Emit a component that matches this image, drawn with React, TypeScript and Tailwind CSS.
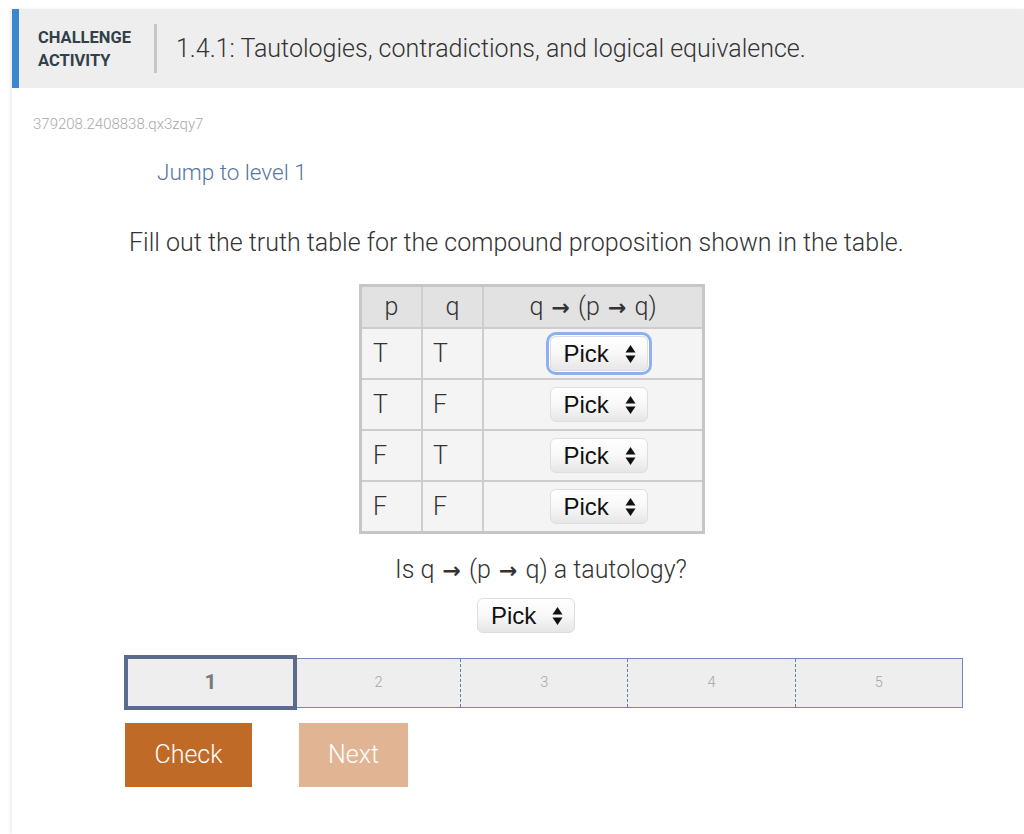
import React from "react";

const font = { fontFamily: "Roboto, 'Helvetica Neue', Arial, sans-serif" };

function Arr() {
  return (
    <span className="mx-[2px] text-[22px] font-bold leading-none" style={{ fontFamily: "'DejaVu Sans', sans-serif" }}>
      →
    </span>
  );
}

function Arrows() {
  return (
    <svg width="11" height="20" viewBox="0 0 11 20" className="shrink-0">
      <path d="M5.5 1 L10.5 8.5 L0.5 8.5 Z" fill="#111" />
      <path d="M5.5 19 L10.5 11.5 L0.5 11.5 Z" fill="#111" />
    </svg>
  );
}

function Pick({ focused = false }: { focused?: boolean }) {
  return (
    <div
      className={
        "flex h-[35px] w-[98px] items-center justify-between rounded-[6px] border border-[#dedede] bg-gradient-to-b from-white via-[#f8f8f8] to-[#e6e6e6] pl-[13px] pr-[11px] " +
        (focused ? "shadow-[0_0_0_1px_#ffffff,0_0_0_4px_#8db0f1]" : "")
      }
    >
      <span className="text-[24px] leading-none text-[#111]" style={{ fontFamily: "'Liberation Sans', Arial, sans-serif" }}>
        Pick
      </span>
      <Arrows />
    </div>
  );
}

const rows: [string, string][] = [
  ["T", "T"],
  ["T", "F"],
  ["F", "T"],
  ["F", "F"],
];

export default function App() {
  return (
    <div className="min-h-[834px] bg-white pl-[12px] pt-[9px]" style={font}>
      <div className="min-h-[825px] bg-white shadow-[-2px_0_3px_rgba(0,0,0,0.07)]">
        {/* Header */}
        <div className="flex h-[79px] items-center border-l-[7px] border-[#3a86cf] bg-[#eeeeee]">
          <div className="w-[135px] pl-[19px] text-[16.5px] font-bold leading-[23px] text-[#333f49]">
            <div>CHALLENGE</div>
            <div>ACTIVITY</div>
          </div>
          <div className="h-[49px] w-[3px] bg-[#c6c6c6]" />
          <div className="ml-[19px] text-[25px] font-light text-[#333333]">
            1.4.1: Tautologies, contradictions, and logical equivalence.
          </div>
        </div>

        {/* Body */}
        <div className="pl-[21px]">
          <div className="mt-[27px] text-[15px] font-light leading-[18px] text-[#a9a9a9]">379208.2408838.qx3zqy7</div>
        </div>
        <div className="ml-[145px] mt-[25px] text-[22.5px] font-light leading-[28px] text-[#5677a2]">Jump to level 1</div>

        <div className="ml-[112px] w-[839px]">
          <div className="mt-[42px] pl-[5px] text-[25px] font-light leading-[30px] text-[#333333]">
            Fill out the truth table for the compound proposition shown in the table.
          </div>

          {/* Truth table */}
          <div className="ml-[235px] mt-[26px] w-[346px] border-[3px] border-[#c6c6c6] text-[25px] font-light text-[#333333]">
            <div className="flex h-[40px] bg-[#e2e2e2]">
              <div className="flex w-[59px] items-center justify-center">p</div>
              <div className="flex w-[61px] items-center justify-center border-l-2 border-[#cdcdcd]">q</div>
              <div className="flex flex-1 items-center justify-center border-l-2 border-[#cdcdcd]">
                <span>q <Arr /> (p <Arr /> q)</span>
              </div>
            </div>
            {rows.map(([p, q], i) => (
              <div key={i} className="flex h-[51px] border-t-2 border-[#cdcdcd] bg-[#f4f4f4]">
                <div className="flex w-[59px] items-center pl-[11px]">{p}</div>
                <div className="flex w-[61px] items-center border-l-2 border-[#cdcdcd] pl-[10px]">{q}</div>
                <div className="flex flex-1 items-center justify-center border-l-2 border-[#cdcdcd] pl-[11px]">
                  <Pick focused={i === 0} />
                </div>
              </div>
            ))}
          </div>

          <div className="ml-[271px] mt-[21px] h-[30px] text-[25px] font-light leading-[30px] text-[#333333]">
            Is q <Arr /> (p <Arr /> q) a tautology?
          </div>
          <div className="ml-[353px] mt-[13px]">
            <Pick />
          </div>

          {/* Level bar */}
          <div className="mt-[22px] flex h-[55px] items-center">
            <div className="flex h-[55px] w-[173px] items-center justify-center border-4 border-[#5a6b8b] bg-[#eeeeee] text-[21px] font-bold text-[#7a7a7a]">
              1
            </div>
            <div className="flex h-[50px] flex-1 border-y border-r border-[#6e8bb3] bg-[#eeeeee] text-[14.5px] font-light text-[#a5a5a5]">
              <div className="flex w-[163px] items-center justify-center">2</div>
              <div className="flex flex-1 items-center justify-center border-l border-dashed border-[#5f7fab]">3</div>
              <div className="flex flex-1 items-center justify-center border-l border-dashed border-[#5f7fab]">4</div>
              <div className="flex flex-1 items-center justify-center border-l border-dashed border-[#5f7fab]">5</div>
            </div>
          </div>

          {/* Buttons */}
          <div className="mt-[13px] flex gap-[47px] pl-px">
            <div className="flex h-[64px] w-[127px] items-center justify-center bg-[#c06a27] text-[25px] font-light text-white">
              Check
            </div>
            <div className="flex h-[64px] w-[109px] items-center justify-center bg-[#e1b594] text-[25px] font-light text-white">
              Next
            </div>
          </div>
        </div>
      </div>
    </div>
  );
}
